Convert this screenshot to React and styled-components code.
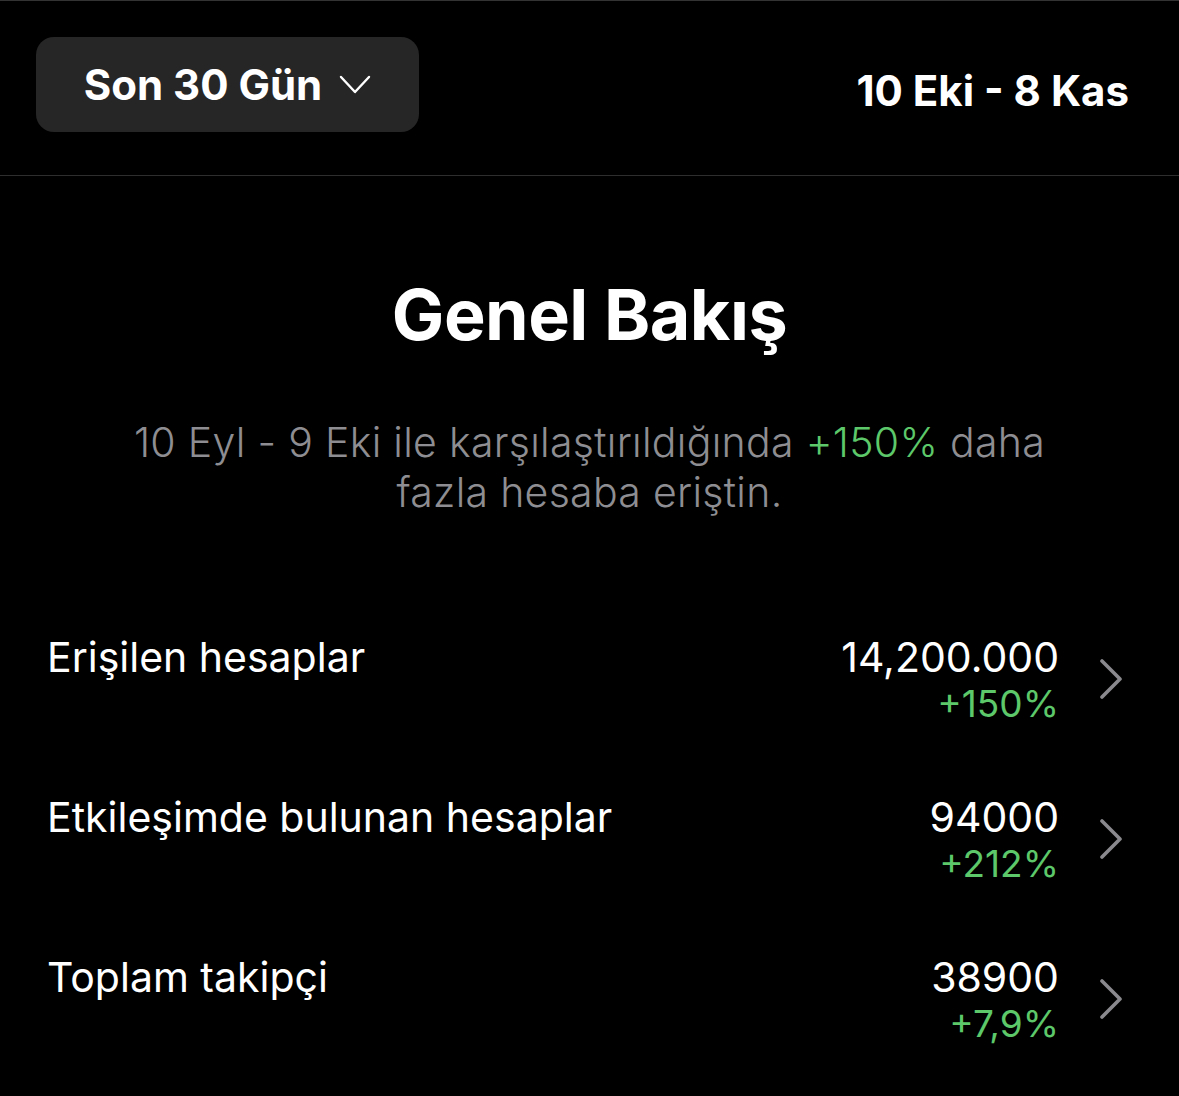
import React from 'react'
import styled, { createGlobalStyle } from 'styled-components'

const GlobalStyle = createGlobalStyle`
  html, body {
    margin: 0;
    padding: 0;
    background: #000;
  }
  body {
    font-family: Inter, "Noto Sans", "Liberation Sans", sans-serif;
    color: #fff;
    -webkit-font-smoothing: antialiased;
  }
`

const Page = styled.div`
  width: 1179px;
  min-height: 1096px;
  background: #000;
  border-top: 1px solid #333;
  box-sizing: border-box;
`

const Header = styled.header`
  height: 175px;
  box-sizing: border-box;
  padding: 36px 50px 0 36px;
  display: flex;
  align-items: flex-start;
  justify-content: space-between;
  border-bottom: 1px solid #2e2e2e;
`

const RangeButton = styled.button`
  width: 383px;
  height: 95px;
  border: none;
  border-radius: 18px;
  background: #262626;
  color: #fff;
  font-family: inherit;
  font-size: 42px;
  font-weight: 700;
  display: flex;
  align-items: center;
  justify-content: center;
  gap: 17px;
  padding: 0;
  cursor: pointer;
`

const DateRange = styled.div`
  font-size: 42px;
  font-weight: 700;
  line-height: 51px;
  margin-top: 28px;
`

const Overview = styled.section`
  padding: 97px 40px 0;
  text-align: center;
`

const Title = styled.h1`
  margin: 0;
  font-size: 70px;
  font-weight: 700;
  line-height: 84px;
  letter-spacing: -0.5px;
`

const Summary = styled.p`
  margin: 60px auto 0;
  width: 935px;
  font-size: 41px;
  font-weight: 300;
  line-height: 50px;
  letter-spacing: 0.3px;
  color: #8e8e92;
`

const Up = styled.span`
  color: #5cc86a;
`

const List = styled.ul`
  list-style: none;
  margin: 116px 0 0;
  padding: 0 56px 0 47px;
`

const Row = styled.li`
  display: flex;
  align-items: flex-start;
  height: 160px;
`

const Label = styled.span`
  flex: 1;
  font-size: 41px;
  font-weight: 400;
  line-height: 48px;
`

const Figures = styled.div`
  display: flex;
  flex-direction: column;
  align-items: flex-end;
  font-size: 41px;
  line-height: 48px;
`

const Change = styled.span`
  color: #5cc86a;
  font-size: 37px;
  line-height: 46px;
`

const Chevron = styled.svg`
  margin: 26px 0 0 40px;
  flex: none;
`

const stats = [
  { label: 'Erişilen hesaplar', value: '14,200.000', change: '+150%' },
  { label: 'Etkileşimde bulunan hesaplar', value: '94000', change: '+212%' },
  { label: 'Toplam takipçi', value: '38900', change: '+7,9%' },
]

const App = () => {
  return (
    <Page>
      <GlobalStyle />
      <Header>
        <RangeButton type="button">
          Son 30 Gün
          <svg width="32" height="20" viewBox="0 0 32 20" fill="none">
            <path d="M2 2 L16 17 L30 2" stroke="#fff" strokeWidth="2.4" strokeLinecap="round" strokeLinejoin="round" />
          </svg>
        </RangeButton>
        <DateRange>10 Eki - 8 Kas</DateRange>
      </Header>

      <Overview>
        <Title>Genel Bakış</Title>
        <Summary>
          10 Eyl - 9 Eki ile karşılaştırıldığında <Up>+150%</Up> daha fazla hesaba eriştin.
        </Summary>
      </Overview>

      <List>
        {stats.map((item) => (
          <Row key={item.label}>
            <Label>{item.label}</Label>
            <Figures>
              <span>{item.value}</span>
              <Change>{item.change}</Change>
            </Figures>
            <Chevron width="24" height="40" viewBox="0 0 24 40" fill="none">
              <path d="M3 2 L21 20 L3 38" stroke="#8a8a8e" strokeWidth="3.6" strokeLinecap="round" strokeLinejoin="round" />
            </Chevron>
          </Row>
        ))}
      </List>
    </Page>
  )
}

export default App
